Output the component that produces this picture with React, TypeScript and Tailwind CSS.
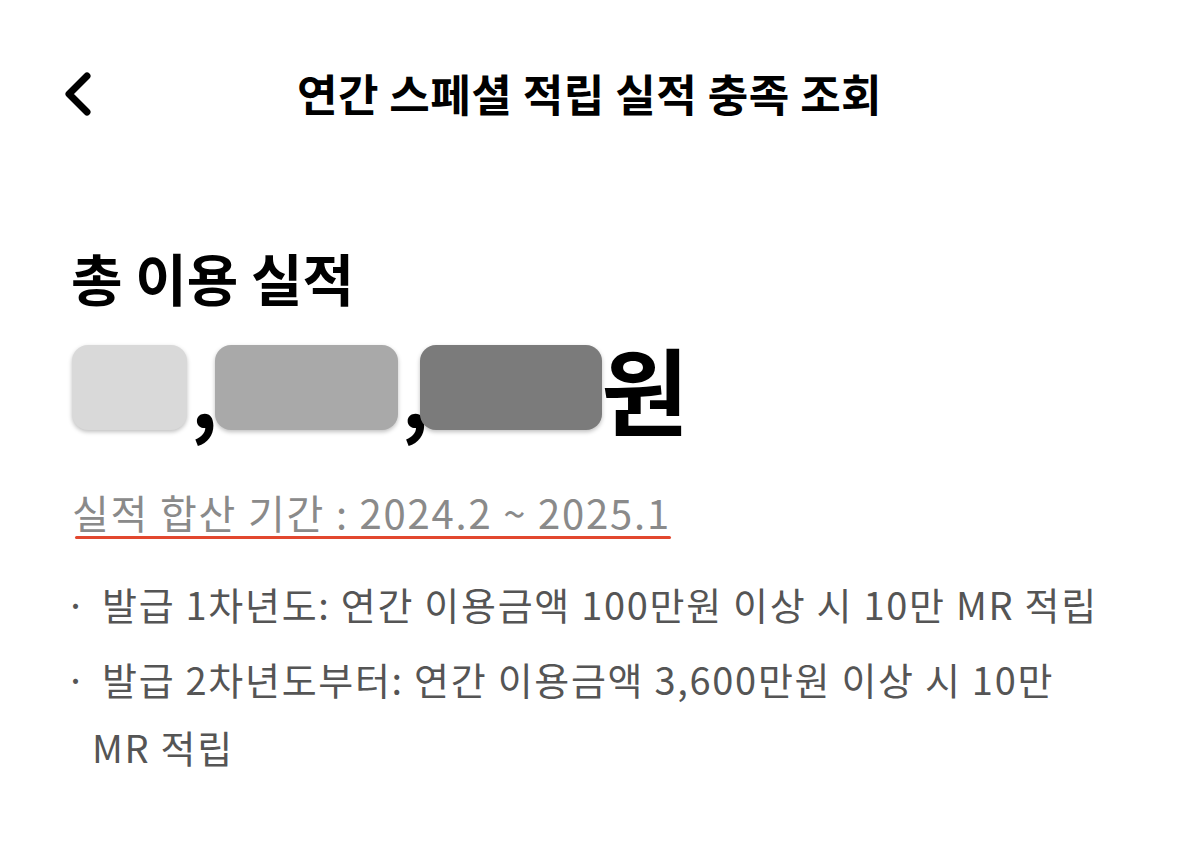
import React from "react";

const font = { fontFamily: '"Noto Sans CJK KR", "Noto Sans", sans-serif' };

const BackIcon: React.FC = () => (
  <svg width="32" height="48" viewBox="0 0 32 48" fill="none">
    <path d="M25 6 L7 24 L25 42" stroke="#000" strokeWidth="7" strokeLinecap="round" strokeLinejoin="round" />
  </svg>
);

const MaskBox: React.FC<{ width: string; color: string }> = ({ width, color }) => (
  <div className={`${width} ${color} h-[85px] rounded-[16px] shadow-[0_2px_4px_rgba(0,0,0,0.25)] relative z-10`} />
);

const App: React.FC = () => {
  const rules = [
    "발급 1차년도: 연간 이용금액 100만원 이상 시 10만 MR 적립",
    "발급 2차년도부터: 연간 이용금액 3,600만원 이상 시 10만 MR 적립",
  ];

  return (
    <div className="min-h-screen bg-white text-black" style={font}>
      <header className="relative h-[190px] flex items-start pt-[70px] px-[62px]">
        <button className="w-[40px] h-[48px] flex items-center">
          <BackIcon />
        </button>
        <h1 className="absolute left-0 right-0 top-[63px] text-center text-[44px] font-bold leading-[60px] tracking-[0.5px]">
          연간 스페셜 적립 실적 충족 조회
        </h1>
      </header>

      <main className="px-[72px]">
        <h2 className="text-[56px] font-bold leading-[70px] mt-[52px] -ml-[1px]">총 이용 실적</h2>

        <div className="flex items-start mt-[33px] h-[100px]">
          <MaskBox width="w-[115px]" color="bg-[#d9d9d9]" />
          <span className="text-[82px] font-bold leading-[100px] ml-[4px] -mr-[3px] relative top-[-2px]">,</span>
          <MaskBox width="w-[183px]" color="bg-[#a9a9a9]" />
          <span className="text-[82px] font-bold leading-[100px] ml-[4px] -mr-[8px] relative top-[-2px]">,</span>
          <MaskBox width="w-[182px]" color="bg-[#7b7b7b]" />
          <span className="text-[95px] font-bold leading-[100px] -mt-[7px] -ml-[1px]">원</span>
        </div>

        <div className="mt-[45px] inline-block">
          <p className="text-[40px] leading-[44px] tracking-[1.8px] text-[#8a8a8a]">실적 합산 기간 : 2024.2 ~ 2025.1</p>
          <div className="h-[3px] bg-[#e2472e] mt-[2px] ml-[3px] rounded-full" />
        </div>

        <ul className="mt-[31px] space-y-[7px] text-[38px] leading-[68px] tracking-[1.7px] text-[#555555] max-w-[1055px] break-keep">
          {rules.map((r) => (
            <li key={r} className="pl-[20px] -indent-[20px]">
              <span className="inline-block w-[30px] indent-0 tracking-normal relative -left-[7px]">·</span>
              {r}
            </li>
          ))}
        </ul>
      </main>
    </div>
  );
};

export default App;
